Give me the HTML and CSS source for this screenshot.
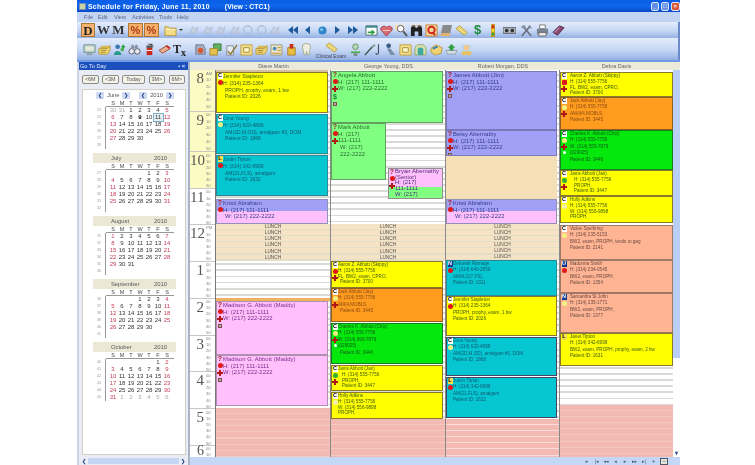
FILE: index.html
```html
<!DOCTYPE html>
<html lang="en">
<head>
<meta charset="utf-8">
<title>Schedule</title>
<link rel="stylesheet" href="styles.css">
</head>
<body>
<svg class="defs" xmlns="http://www.w3.org/2000/svg">
<symbol id="folder" viewBox="0 0 14 14"><path d="M1 3h4l1 1.500h7v8H1z" fill="#f5dc86" stroke="#b8963c"/><path d="M1.500 6h11" stroke="#fff3c0"/></symbol>
<symbol id="gray" viewBox="0 0 14 14"><path d="M2 11L6 3l3 3 3-3-2 8z" fill="#c5cfe2" stroke="#aeb9d2"/></symbol>
<symbol id="grayc" viewBox="0 0 14 14"><circle cx="7" cy="7" r="5" fill="none" stroke="#aeb9d2" stroke-width="1.500"/></symbol>
<symbol id="dl" viewBox="0 0 10 10"><path d="M5 1v8L0 5zM10 1v8L5 5z" fill="#1f5a9c"/></symbol>
<symbol id="dr" viewBox="0 0 10 10"><path d="M0 1v8l5-4zM5 1v8l5-4z" fill="#1f5a9c"/></symbol>
<symbol id="sl" viewBox="0 0 5 10"><path d="M5 1v8L0 5z" fill="#1f5a9c"/></symbol>
<symbol id="sr" viewBox="0 0 5 10"><path d="M0 1v8l5-4z" fill="#1f5a9c"/></symbol>
<symbol id="ball" viewBox="0 0 10 10"><circle cx="5" cy="5" r="4.500" fill="#2f86c8"/><circle cx="4" cy="4" r="1.500" fill="#8fd0f2"/></symbol>
<symbol id="win" viewBox="0 0 14 14"><path d="M1 2h12v10H1z" fill="#fff" stroke="#4a6a6a"/><path d="M1 2h12v2H1z" fill="#3a8a8a"/><path d="M3 8h4V6l4 3-4 3v-2H3z" fill="#2aa040"/></symbol>
<symbol id="heart" viewBox="0 0 14 14"><path d="M7 13L1 6.500C0 3 4 1 7 3.500 10 1 14 3 13 6.500z" fill="#d86a70" stroke="#a84048"/><path d="M3 7h8" stroke="#f4d0c8"/></symbol>
<symbol id="mag" viewBox="0 0 14 14"><path d="M0 1h10v6H0z" fill="#f3e2b0"/><circle cx="6" cy="5" r="3.500" fill="#fff" stroke="#555"/><path d="M9 8l4 5" stroke="#555" stroke-width="2"/></symbol>
<symbol id="binoc" viewBox="0 0 14 14"><path d="M1 13V4l2-3h2l1 3h2l1-3h2l2 3v9H9V8H5v5z" fill="#222"/><path d="M1 2h12" stroke="#c8a870"/></symbol>
<symbol id="q" viewBox="0 0 14 14"><path d="M1 1h12v12H1z" fill="#f3d9a0" stroke="#c88030"/><circle cx="7" cy="6.500" r="3.500" fill="none" stroke="#d02818" stroke-width="2"/><path d="M8 9l3 3" stroke="#d02818" stroke-width="2"/></symbol>
<symbol id="book" viewBox="0 0 14 14"><path d="M3 1h10l-2 9H1z" fill="#8a8a8a"/><path d="M1 10h10l-1 3H1z" fill="#e8b060"/></symbol>
<symbol id="tag" viewBox="0 0 14 14"><path d="M1 5l4-3 8 7-3 3z" fill="#ecd77a" stroke="#b8a040"/></symbol>
<symbol id="light" viewBox="0 0 6 14"><path d="M1 0h4v14H1z" fill="#c89020"/><circle cx="3" cy="3" r="1.500" fill="#d82010"/><circle cx="3" cy="7" r="1.500" fill="#f0e020"/><circle cx="3" cy="11" r="1.500" fill="#30b030"/></symbol>
<symbol id="glass" viewBox="0 0 14 14"><path d="M0 4h14v6H0z" fill="#b8bec8" stroke="#555"/><circle cx="4" cy="7" r="2" fill="#333"/><circle cx="10" cy="7" r="2" fill="#333"/></symbol>
<symbol id="tools" viewBox="0 0 14 14"><path d="M2 13L11 2M12 13L3 2" stroke="#6a7280" stroke-width="1.800"/><path d="M1 3l4-2 1 2-3 2zM10 1l3 3-2 1-2-2z" fill="#8a92a0"/></symbol>
<symbol id="print" viewBox="0 0 14 14"><path d="M4 1h6v4H4z" fill="#fff" stroke="#777"/><path d="M1 5h12v6H1z" fill="#7a8494"/><path d="M3 9h8v4H3z" fill="#e8e8e8" stroke="#666"/></symbol>
<symbol id="pbook" viewBox="0 0 14 14"><path d="M1 9l7-7 5 2-7 8z" fill="#8a4a70" stroke="#5a3050"/><path d="M3 9l5-5" stroke="#d8b0c8"/></symbol>
<symbol id="mon" viewBox="0 0 14 14"><path d="M1 2h12v8H1z" fill="#c8dcd8" stroke="#6a8a88"/><path d="M3 4h8v4H3z" fill="#e8e8d8"/><path d="M4 11h6v2H4z" fill="#8aa0a0"/></symbol>
<symbol id="fold2" viewBox="0 0 14 14"><path d="M1 6l3-3h9l-3 3z" fill="#d8b850"/><path d="M1 6h9l3-3v5l-3 4H1z" fill="#efd372" stroke="#b89a40"/><path d="M3 8h6M3 10h5" stroke="#a88a30"/></symbol>
<symbol id="ppl" viewBox="0 0 14 14"><circle cx="5" cy="4" r="2.500" fill="#3a78b0"/><path d="M1 13c0-6 8-6 8 0z" fill="#2a9a88"/><circle cx="10" cy="7" r="2" fill="#50b050"/><path d="M9 4h4M11 2v4" stroke="#20a040" stroke-width="1.500"/></symbol>
<symbol id="bino2" viewBox="0 0 14 14"><circle cx="4" cy="9" r="3" fill="#e8e8f0" stroke="#556"/><circle cx="10" cy="9" r="3" fill="#e8e8f0" stroke="#556"/><path d="M3 6l1-4h2l1 3 1-3h2l1 4" fill="#8a90a0"/></symbol>
<symbol id="ext" viewBox="0 0 14 14"><path d="M4 5h6v8H4z" fill="#c82818"/><path d="M5 1h5v2l2 1M4 3h6v2H4z" fill="#555" stroke="#555" stroke-width=".5"/><path d="M4 8h6" stroke="#fff"/></symbol>
<symbol id="pen" viewBox="0 0 14 14"><path d="M1 8l8-5 4 3-8 5z" fill="#e6b090" stroke="#a04830"/><path d="M9 3l4 3" stroke="#c82818" stroke-width="2"/></symbol>
<symbol id="red" viewBox="0 0 14 14"><path d="M2 2h8l2 4v6H2z" fill="#a9b2c4" stroke="#6a7488"/><circle cx="7" cy="8" r="3" fill="#d85a30"/></symbol>
<symbol id="stack" viewBox="0 0 14 14"><path d="M5 1h8v7H5z" fill="#60b060" stroke="#3a7a3a"/><path d="M1 6h8v7H1z" fill="#e8c050" stroke="#a88a30"/></symbol>
<symbol id="check" viewBox="0 0 14 14"><path d="M2 3h7v10H2z" fill="#e8ebf0" stroke="#808a9a"/><path d="M3 9l3 3 7-10" fill="none" stroke="#8a7830" stroke-width="1.500"/></symbol>
<symbol id="note" viewBox="0 0 14 14"><path d="M1 2h12v11H1z" fill="#f6e08a" stroke="#c0a040"/><path d="M4 5h6v5H4z" fill="#fff6c8" stroke="#a09040"/></symbol>
<symbol id="card" viewBox="0 0 14 14"><path d="M1 2h12v11H1z" fill="#e8e4c8" stroke="#9a9a80"/><circle cx="5" cy="6" r="2" fill="#4a88c0"/><path d="M8 5h4M8 8h4M2 11h10" stroke="#c09030"/></symbol>
<symbol id="nail" viewBox="0 0 10 14"><path d="M1 5h8v8H1z" fill="#e8c040" stroke="#a88030"/><path d="M3 1h4v5H3z" fill="#c83020"/></symbol>
<symbol id="tooth" viewBox="0 0 10 14"><path d="M1 2c3-2 5-2 8 0 1 4-1 6-1 10l-2 1-1-4-1 4-2-1C2 8 0 6 1 2z" fill="#f0eee0" stroke="#a0a890"/></symbol>
<symbol id="man" viewBox="0 0 14 14"><circle cx="7" cy="4" r="3" fill="#b8d8b8" stroke="#609060"/><path d="M2 9h10v2H2z" fill="#50b050"/><path d="M5 11h4v3H5z" fill="#808a90"/></symbol>
<symbol id="pick" viewBox="0 0 14 14"><path d="M1 13l8-9" stroke="#405850" stroke-width="1.500"/><path d="M9 4l3-2" stroke="#80a090" stroke-width="2"/></symbol>
<symbol id="hook" viewBox="0 0 8 14"><path d="M4 1v9c0 3-3 3-3 1" fill="none" stroke="#405060" stroke-width="1.300"/></symbol>
<symbol id="pers" viewBox="0 0 12 14"><circle cx="4" cy="3" r="2.500" fill="#3a5a80"/><path d="M2 6h4l5 7H6z" fill="#7a90a8"/></symbol>
<symbol id="arch" viewBox="0 0 14 14"><path d="M1 13V6c0-6 12-6 12 0v7z" fill="#d8e0a8" stroke="#90a878"/><path d="M4 13V7c0-3 6-3 6 0v6z" fill="#40a8a0"/></symbol>
<symbol id="sw" viewBox="0 0 14 14"><path d="M1 6l5-4 7 3-1 6-6 2-5-3z" fill="#efd372" stroke="#b89a40"/><path d="M3 6l5-2" stroke="#2a7ab8" stroke-width="2"/></symbol>
<symbol id="up" viewBox="0 0 14 14"><path d="M1 8l12 0-2 4H3z" fill="#d8dce8" stroke="#90a0a8"/><path d="M7 1l4 4H9v3H5V5H3z" fill="#30a040"/></symbol>
<symbol id="face" viewBox="0 0 14 14"><path d="M2 2h10v9H2z" fill="#b8d8e8"/><circle cx="7" cy="5" r="3" fill="#f0c890"/><path d="M2 9h10v4H2z" fill="#e8c060"/></symbol>
</svg>

<div class="window">
  <header class="titlebar">
    <span class="appicon"></span>
    <span class="title">Schedule for Friday, June 11, 2010</span>
    <span class="view">(View : CTC1)</span>
    <span class="winbtns"><i class="wb">_</i><i class="wb">&#9633;</i><i class="wb close">&#215;</i></span>
  </header>
  <nav class="menu"><span>File</span><span>Edit</span><span>View</span><span>Activities</span><span>Tools</span><span>Help</span></nav>

  <div class="toolbar tb1">
    <span class="vbtn on">D</span><span class="vbtn w">W</span><span class="vbtn m">M</span>
    <span class="pct on">%</span><span class="pct on second">%</span>
    <svg class="i g3"><use href="#folder"/></svg><span class="caret"></span>
    <svg class="dim g3"><use href="#gray"/></svg><svg class="dim"><use href="#gray"/></svg><svg class="dim"><use href="#gray"/></svg><svg class="dim"><use href="#gray"/></svg><svg class="dim"><use href="#grayc"/></svg><svg class="dim"><use href="#grayc"/></svg><svg class="dim"><use href="#gray"/></svg>
    <svg class="nav2 g5"><use href="#dl"/></svg><svg class="nav1"><use href="#sl"/></svg><svg class="navb"><use href="#ball"/></svg><svg class="nav1"><use href="#sr"/></svg><svg class="nav2"><use href="#dr"/></svg>
    <svg class="i"><use href="#win"/></svg><svg class="i"><use href="#heart"/></svg><svg class="i"><use href="#mag"/></svg><svg class="i"><use href="#binoc"/></svg><svg class="i"><use href="#q"/></svg><svg class="i"><use href="#book"/></svg><svg class="i"><use href="#tag"/></svg>
    <span class="dollar">$</span><svg class="tl"><use href="#light"/></svg><svg class="i g5"><use href="#glass"/></svg><svg class="i g2"><use href="#tools"/></svg><svg class="i g1"><use href="#print"/></svg><svg class="i g1"><use href="#pbook"/></svg>
  </div>

  <div class="toolbar tb2">
    <svg class="i"><use href="#mon"/></svg><svg class="i"><use href="#fold2"/></svg><svg class="i"><use href="#ppl"/></svg><svg class="i"><use href="#bino2"/></svg><svg class="i"><use href="#ext"/></svg><svg class="i"><use href="#pen"/></svg>
    <span class="tx">T<sub>x</sub></span>
    <svg class="i g5"><use href="#red"/></svg><svg class="i"><use href="#stack"/></svg>
    <svg class="i g1"><use href="#check"/></svg><svg class="i"><use href="#note"/></svg><svg class="i"><use href="#fold2"/></svg><svg class="i"><use href="#card"/></svg><svg class="i"><use href="#nail"/></svg><svg class="i"><use href="#tooth"/></svg>
    <span class="clin"><svg class="i"><use href="#tag"/></svg><small>Clinical Exam</small></span>
    <svg class="i"><use href="#man"/></svg><svg class="i"><use href="#pick"/></svg><svg class="hook"><use href="#hook"/></svg><svg class="i"><use href="#pers"/></svg><svg class="i"><use href="#note"/></svg><svg class="i"><use href="#arch"/></svg>
    <svg class="i g1"><use href="#sw"/></svg><svg class="i"><use href="#up"/></svg><svg class="i"><use href="#face"/></svg>
  </div>
  <div class="band"></div>

  <main class="main">
    <aside class="side">
      <div class="sidehead"><span>Go To Day</span><span class="pin">&#8226; &#215;</span></div>
      <div class="jump"><button>&lt;6M</button><button>&lt;3M</button><button class="today">Today</button><button>3M&gt;</button><button>6M&gt;</button></div>
      <div class="calpanel">
        <section class="month">
          <div class="mhead first"><b>&#10094;</b><span class="nm">June</span><b>&#10095;</b><b class="y1">&#10094;</b><span>2010</span><b>&#10095;</b></div>
          <div class="dow"><span>S</span><span>M</span><span>T</span><span>W</span><span>T</span><span>F</span><span>S</span></div>
          <div class="mbody"><div class="wk"><span>23</span><span>24</span><span>25</span><span>26</span><span>27</span><span>28</span></div>
          <div class="days"><span class="g">30</span><span class="g">31</span><span>1</span><span>2</span><span>3</span><span>4</span><span class="r">5</span><span class="r">6</span><span>7</span><span>8</span><b>9</b><span>10</span><span class="sel">11</span><span class="r">12</span><span class="r">13</span><span>14</span><span>15</span><span>16</span><span>17</span><span>18</span><span class="r">19</span><span class="r">20</span><span>21</span><span>22</span><span>23</span><span>24</span><span>25</span><span class="r">26</span><span class="r">27</span><span>28</span><span>29</span><span>30</span></div></div>
        </section>
        <section class="month">
          <div class="mhead"><span class="nm">July</span><span>2010</span></div>
          <div class="dow"><span>S</span><span>M</span><span>T</span><span>W</span><span>T</span><span>F</span><span>S</span></div>
          <div class="mbody"><div class="wk"><span>27</span><span>28</span><span>29</span><span>30</span><span>31</span><span>32</span></div>
          <div class="days"><span></span><span></span><span></span><span></span><span>1</span><span>2</span><span class="r">3</span><span class="r">4</span><span>5</span><span>6</span><span>7</span><span>8</span><span>9</span><span class="r">10</span><span class="r">11</span><span>12</span><span>13</span><span>14</span><span>15</span><span>16</span><span class="r">17</span><span class="r">18</span><span>19</span><span>20</span><span>21</span><span>22</span><span>23</span><span class="r">24</span><span class="r">25</span><span>26</span><span>27</span><span>28</span><span>29</span><span>30</span><span class="r">31</span></div></div>
        </section>
        <section class="month">
          <div class="mhead"><span class="nm">August</span><span>2010</span></div>
          <div class="dow"><span>S</span><span>M</span><span>T</span><span>W</span><span>T</span><span>F</span><span>S</span></div>
          <div class="mbody"><div class="wk"><span>31</span><span>32</span><span>33</span><span>34</span><span>35</span><span>36</span></div>
          <div class="days"><span class="r">1</span><span>2</span><span>3</span><span>4</span><span>5</span><span>6</span><span class="r">7</span><span class="r">8</span><span>9</span><span>10</span><span>11</span><span>12</span><span>13</span><span class="r">14</span><span class="r">15</span><span>16</span><span>17</span><span>18</span><span>19</span><span>20</span><span class="r">21</span><span class="r">22</span><span>23</span><span>24</span><span>25</span><span>26</span><span>27</span><span class="r">28</span><span class="r">29</span><span>30</span><span>31</span></div></div>
        </section>
        <section class="month">
          <div class="mhead"><span class="nm">September</span><span>2010</span></div>
          <div class="dow"><span>S</span><span>M</span><span>T</span><span>W</span><span>T</span><span>F</span><span>S</span></div>
          <div class="mbody"><div class="wk"><span>36</span><span>37</span><span>38</span><span>39</span><span>40</span><span>41</span></div>
          <div class="days"><span></span><span></span><span></span><span>1</span><span>2</span><span>3</span><span class="r">4</span><span class="r">5</span><span>6</span><span>7</span><span>8</span><span>9</span><span>10</span><span class="r">11</span><span class="r">12</span><span>13</span><span>14</span><span>15</span><span>16</span><span>17</span><span class="r">18</span><span class="r">19</span><span>20</span><span>21</span><span>22</span><span>23</span><span>24</span><span class="r">25</span><span class="r">26</span><span>27</span><span>28</span><span>29</span><span>30</span></div></div>
        </section>
        <section class="month">
          <div class="mhead"><span class="nm">October</span><span>2010</span></div>
          <div class="dow"><span>S</span><span>M</span><span>T</span><span>W</span><span>T</span><span>F</span><span>S</span></div>
          <div class="mbody"><div class="wk"><span>40</span><span>41</span><span>42</span><span>43</span><span>44</span><span>45</span></div>
          <div class="days"><span></span><span></span><span></span><span></span><span></span><span>1</span><span class="r">2</span><span class="r">3</span><span>4</span><span>5</span><span>6</span><span>7</span><span>8</span><span class="r">9</span><span class="r">10</span><span>11</span><span>12</span><span>13</span><span>14</span><span>15</span><span class="r">16</span><span class="r">17</span><span>18</span><span>19</span><span>20</span><span>21</span><span>22</span><span class="r">23</span><span class="r">24</span><span>25</span><span>26</span><span>27</span><span>28</span><span>29</span><span class="r">30</span><span class="r">31</span><span class="g">1</span><span class="g">2</span><span class="g">3</span><span class="g">4</span><span class="g">5</span><span class="g">6</span></div></div>
        </section>
      </div>
      <div class="hscroll"><b>&#10094;</b><i></i><b>&#10095;</b></div>
    </aside>

    <section class="board">
      <div class="colheads"><span class="c0"></span><span class="c1">Diane Martin</span><span class="c2">George Young, DDS</span><span class="c3">Robert Morgan, DDS</span><span class="c4">Debra Davis</span><span class="c5"></span></div>
      <div class="mid">
        <div class="sched">
          <div class="times">
            <div class="hr h40 am"><b>8</b><ul><li>AM</li><li>10</li><li>20</li><li>30</li><li>40</li><li>50</li></ul></div>
            <div class="hr h40 am"><b>9</b><ul><li>00</li><li>10</li><li>20</li><li>30</li><li>40</li><li>50</li></ul></div>
            <div class="hr h37 am"><b>10</b><ul><li>00</li><li>10</li><li>20</li><li>30</li><li>40</li><li>50</li></ul></div>
            <div class="hr h36"><b>11</b><ul><li>00</li><li>10</li><li>20</li><li>30</li><li>40</li><li>50</li></ul></div>
            <div class="hr h37"><b>12</b><ul><li>PM</li><li>10</li><li>20</li><li>30</li><li>40</li><li>50</li></ul></div>
            <div class="hr h37"><b>1</b><ul><li>00</li><li>10</li><li>20</li><li>30</li><li>40</li><li>50</li></ul></div>
            <div class="hr h37"><b>2</b><ul><li>00</li><li>10</li><li>20</li><li>30</li><li>40</li><li>50</li></ul></div>
            <div class="hr h37"><b>3</b><ul><li>00</li><li>10</li><li>20</li><li>30</li><li>40</li><li>50</li></ul></div>
            <div class="hr h37"><b>4</b><ul><li>00</li><li>10</li><li>20</li><li>30</li><li>40</li><li>50</li></ul></div>
            <div class="hr h37"><b>5</b><ul><li>00</li><li>10</li><li>20</li><li>30</li><li>40</li><li>50</li></ul></div>
            <div class="hr h12"><b>6</b><ul><li>00</li><li>10</li></ul></div>
          </div>

          <div class="col">
            <div class="tan" style="grid-row:1/3"></div>
            <div class="appt yellow" style="grid-row:3/44"><div class="marks"><i class="chip">C</i><i class="dot red"></i></div><div class="lines sm"><p>Jennifer Stapleton</p><p>H: (314) 235-1364</p><p class="in">PROPH, prophy, exam, 1 bw</p><p class="in">Patient ID: 2026</p></div></div>
            <div class="appt cyan" style="grid-row:45/85"><div class="marks"><i class="chip">C</i><i class="dot yel"></i></div><div class="lines sm"><p>Gina Young</p><p>H: (314) 620-4899</p><p class="in">AM(2D,M,OD), amalgam #3, DOM</p><p class="in">Patient ID: 1868</p></div></div>
            <div class="appt cyan" style="grid-row:86/127"><div class="marks"><i class="chip y">L</i><i class="dot red"></i></div><div class="lines sm"><p>Justin Tipton</p><p>H: (314) 342-6999</p><p class="in">AM(21,FLS), amalgam</p><p class="in">Patient ID: 1632</p></div></div>
            <div class="appt kristi" style="grid-row:130/155"><div class="marks"><i class="q">?</i><i class="dot red"></i></div><div class="lines lg"><p>Kristi Abraham</p><p>H: (217) 111-1111</p><p class="in">W: (217) 222-2222</p></div></div>
            <div class="lunch" style="grid-row:155/192"><span>LUNCH</span><span>LUNCH</span><span>LUNCH</span><span>LUNCH</span><span>LUNCH</span><span>LUNCH</span></div>
            <div class="now" style="grid-row:229/232"></div>
            <div class="appt pink" style="grid-row:232/286"><div class="marks"><i class="q">?</i><i class="dot red"></i><i class="cross"></i><i class="box"></i></div><div class="lines lg"><p>Madison G. Abbott (Maddy)</p><p>H: (217) 111-1111</p><p>W: (217) 222-2222</p></div></div>
            <div class="appt pink" style="grid-row:286/337"><div class="marks"><i class="q">?</i><i class="dot red"></i><i class="cross"></i><i class="box"></i></div><div class="lines lg"><p>Madison G. Abbott (Maddy)</p><p>H: (217) 111-1111</p><p>W: (217) 222-2222</p></div></div>
            <div class="closed" style="grid-row:339/388"></div>
          </div>

          <div class="col">
            <div class="appt green" style="grid-row:2/54"><div class="marks"><i class="q">?</i><i class="dot red"></i><i class="cross"></i><i class="dollarm">$</i><i class="box"></i></div><div class="lines lg"><p>Angela Abbott</p><p>H: (217) 111-1111</p><p>W: (217) 222-2222</p></div></div>
            <div class="appt green left" style="grid-row:54/111"><div class="marks"><i class="q">?</i><i class="dot red"></i><i class="cross"></i></div><div class="lines lg"><p>Mark Abbott</p><p>H: (217)</p><p>111-1111</p><p class="in">W: (217)</p><p class="in">222-2222</p></div></div>
            <div class="appt bryan right" style="grid-row:99/130"><div class="marks"><i class="q">?</i><i class="dot red"></i><i class="cross"></i></div><div class="lines lg"><p>Bryan Abernathy</p><p>(Senior)</p><p>H: (217)</p><p>111-1111</p><p>W: (217)</p></div></div>
            <div class="lunch" style="grid-row:155/192"><span>LUNCH</span><span>LUNCH</span><span>LUNCH</span><span>LUNCH</span><span>LUNCH</span><span>LUNCH</span></div>
            <div class="appt yellow" style="grid-row:192/219"><div class="marks"><i class="chip">C</i><i class="dot red"></i><i class="cross"></i></div><div class="lines xs"><p>Aaron Z. Abbott (Skippy)</p><p>H: (314) 555-7756</p><p>FL, BW2, exam, CPRO,</p><p class="in">Patient ID: 3700</p></div></div>
            <div class="appt orange" style="grid-row:219/253"><div class="marks"><i class="chip">C</i><i class="dot yel"></i><i class="cross"></i></div><div class="lines xs"><p>Jack Abbott (Jay)</p><p>H: (314) 555-7756</p><p>AM(4,MOBLS,</p><p class="in">Patient ID: 3445</p></div></div>
            <div class="appt lime" style="grid-row:254/295"><div class="marks"><i class="chip">C</i><i class="dot yel"></i><i class="cross"></i><i class="dot tiny"></i></div><div class="lines xs"><p>Charles K. Abbott (Chip)</p><p>H: (314) 555-7756</p><p>W: (314) 999-7879</p><p>(029025)</p><p class="in">Patient ID: 3446</p></div></div>
            <div class="appt yellow" style="grid-row:296/322"><div class="marks"><i class="chip">C</i><i class="dot grn"></i><i class="cross"></i></div><div class="lines xs deep"><p>Janis Abbott (Jan)</p><p>H: (314) 555-7756</p><p>PROPH,</p><p>Patient ID: 3447</p></div></div>
            <div class="appt yellow" style="grid-row:323/350"><div class="marks"><i class="chip">C</i><i class="dot pale"></i></div><div class="lines xs"><p>Holly Adkins</p><p>H: (314) 555-7756</p><p>W: (314) 556-9898</p><p>PROPH,</p></div></div>
            <div class="closed" style="grid-row:350/388"></div>
          </div>

          <div class="col">
            <div class="appt purple" style="grid-row:2/61"><div class="marks"><i class="q">?</i><i class="dot red"></i><i class="cross"></i><i class="box"></i></div><div class="lines lg"><p>James Abbott (Jim)</p><p>H: (217) 111-1111</p><p>W: (217) 222-2222</p></div></div>
            <div class="appt purple" style="grid-row:61/87"><div class="marks"><i class="q">?</i><i class="dot red"></i><i class="cross"></i><i class="box"></i></div><div class="lines lg"><p>Betsy Abernathy</p><p>H: (217) 111-1111</p><p>W: (217) 222-2222</p></div></div>
            <div class="tan spot" style="grid-row:87/130"></div>
            <div class="appt kristi" style="grid-row:130/155"><div class="marks"><i class="q">?</i><i class="dot red"></i></div><div class="lines lg"><p>Kristi Abraham</p><p>H: (217) 111-1111</p><p class="in">W: (217) 222-2222</p></div></div>
            <div class="lunch" style="grid-row:155/191"><span>LUNCH</span><span>LUNCH</span><span>LUNCH</span><span>LUNCH</span><span>LUNCH</span><span>LUNCH</span></div>
            <div class="appt cyan" style="grid-row:191/227"><div class="marks"><i class="chip n">N</i><i class="dot red"></i></div><div class="lines xs"><p>Deborah Ramage</p><p>H: (314) 640-2859</p><p>AMALG(7,FS),</p><p>Patient ID: 1311</p></div></div>
            <div class="appt yellow" style="grid-row:227/267"><div class="marks"><i class="chip">C</i><i class="dot red"></i></div><div class="lines xs tall"><p>Jennifer Stapleton</p><p>H: (314) 235-1364</p><p>PROPH, prophy, exam, 1 bw</p><p>Patient ID: 2026</p></div></div>
            <div class="appt cyan bd" style="grid-row:268/307"><div class="marks"><i class="chip">C</i><i class="dot yel"></i></div><div class="lines xs"><p>Gina Young</p><p>H: (314) 620-4899</p><p>AM(2D,M,OD), amalgam #3, DOM</p><p>Patient ID: 1868</p></div></div>
            <div class="appt cyan bd" style="grid-row:308/349"><div class="marks"><i class="chip y">L</i><i class="dot red"></i></div><div class="lines xs"><p>Justin Tipton</p><p>H: (314) 342-6999</p><p>AM(21,FLS), amalgam</p><p>Patient ID: 1632</p></div></div>
            <div class="closed lined" style="grid-row:350/388"></div>
          </div>

          <div class="col last">
            <div class="appt yellow" style="grid-row:3/28"><div class="marks"><i class="chip">C</i><i class="dot redsq"></i><i class="cross"></i></div><div class="lines xs ind"><p>Aaron Z. Abbott (Skippy)</p><p>H: (314) 555-7756</p><p>FL, BW2, exam, CPRO,</p><p>Patient ID: 3700</p></div></div>
            <div class="appt orange" style="grid-row:28/61"><div class="marks"><i class="chip">C</i><i class="dot yel"></i><i class="cross"></i></div><div class="lines xs ind"><p>Jack Abbott (Jay)</p><p>H: (314) 555-7756</p><p>AM(4/4,MOBLS,</p><p>Patient ID: 3445</p></div></div>
            <div class="appt lime" style="grid-row:61/101"><div class="marks"><i class="chip">C</i><i class="dot yel"></i><i class="cross"></i><i class="dot tiny"></i></div><div class="lines xs ind"><p>Charles K. Abbott (Chip)</p><p>H: (314) 555-7756</p><p>W: (314) 555-7879</p><p>(029025)</p><p>Patient ID: 3446</p></div></div>
            <div class="appt yellow" style="grid-row:101/127"><div class="marks"><i class="chip">C</i><i class="dot grn"></i><i class="cross"></i></div><div class="lines xs ind deep"><p>Janis Abbott (Jan)</p><p>H: (314) 555-7756</p><p>PROPH,</p><p>Patient ID: 3447</p></div></div>
            <div class="appt yellow" style="grid-row:127/154"><div class="marks"><i class="chip">C</i><i class="dot pale"></i></div><div class="lines xs ind"><p>Holly Adkins</p><p>H: (314) 555-7756</p><p>W: (314) 556-9898</p><p>PROPH,</p></div></div>
            <div class="appt salmon" style="grid-row:156/191"><div class="marks"><i class="chip">C</i><i class="dot yel"></i></div><div class="lines xs ind"><p>Vickie Spelbring</p><p>H: (314) 235-5153</p><p>BW2, exam, PROPH, tends to gag</p><p>Patient ID: 2141</p></div></div>
            <div class="appt salmon" style="grid-row:191/224"><div class="marks"><i class="chip n">U</i><i class="dot red"></i></div><div class="lines xs ind"><p>Madonna Smith</p><p>H: (314) 234-0545</p><p>BW2, exam, PROPH,</p><p>Patient ID: 1354</p></div></div>
            <div class="appt salmon" style="grid-row:224/264"><div class="marks"><i class="chip n">N</i><i class="dot yel"></i></div><div class="lines xs ind"><p>Samantha St.John</p><p>H: (314) 235-1771</p><p>BW2, exam, PROPH,</p><p>Patient ID: 1377</p></div></div>
            <div class="appt yellow" style="grid-row:264/297"><div class="marks"><i class="chip y">L</i></div><div class="lines xs ind tall"><p>Janet Tipton</p><p>H: (314) 342-6999</p><p>BW2, exam, PROPH, prophy, exam, 2 bw</p><p>Patient ID: 1631</p></div></div>
            <div class="closed" style="grid-row:336/388"></div>
          </div>
        </div>
        <div class="vscroll"><i></i><b>&#9662;</b></div>
      </div>
      <div class="pager"><span>&#9656;</span><span>|&#9666;</span><span>&#9666;&#9666;</span><span>&#9666;</span><span>&#9656;</span><span>&#9656;&#9656;</span><span>&#9656;|</span><span>+</span><span class="minus">&#8722;</span></div>
    </section>
  </main>
</div>
</body>
</html>
```
FILE: styles.css
```css
* { box-sizing: border-box; }
html, body { margin: 0; padding: 0; background: #fff; }
body { width: 755px; height: 465px; overflow: hidden; font-family: "Liberation Sans", Arial, sans-serif; }
.defs { display: none; }
p, ul { margin: 0; padding: 0; list-style: none; }
i, b { font-style: normal; }

.window { margin-left: 77px; width: 603px; height: 465px; display: flex; flex-direction: column; background: #c7d8f5; overflow: hidden; filter: blur(.35px); }

.titlebar { height: 12px; flex: none; display: flex; align-items: center; background: linear-gradient(#0a5ce4, #0f66ee 50%, #0848c4); color: #fff; font-weight: bold; font-size: 6.8px; padding-left: 2px; letter-spacing: .33px; }
.appicon { width: 7px; height: 7px; margin-right: 2px; background: #c8d4a8; border: 1px solid #7a8ab0; }
.view { margin-left: 15px; letter-spacing: .1px; }
.winbtns { margin-left: auto; display: flex; gap: 2px; }
.wb { width: 8px; height: 9px; background: #5f8fe6; border: 1px solid #dde8fb; border-radius: 2px; font-size: 6px; line-height: 6px; text-align: center; }
.close { background: #d8583a; width: 9px; }

.menu { height: 10px; flex: none; display: flex; align-items: center; padding-left: 7px; background: #c2d4f4; color: #5a6680; font-size: 5.6px; }
.menu span:nth-child(1) { width: 14px; }
.menu span:nth-child(2) { width: 16px; }
.menu span:nth-child(3) { width: 18px; }
.menu span:nth-child(4) { width: 27px; }
.menu span:nth-child(5) { width: 18px; }

.toolbar { flex: none; display: flex; align-items: center; background: linear-gradient(#e3ecfb, #c6d7f5 55%, #94b0e4); border-right: 2px solid #6a8ac8; }
.tb1 { height: 16px; padding-left: 4px; gap: 2px; }
.tb2 { height: 22px; padding-left: 6px; gap: 2px; }
.i { width: 13px; height: 13px; flex: none; }
.dim { width: 11.500px; height: 12px; flex: none; }
.g1 { margin-left: 1px; }
.g2 { margin-left: 2px; }
.g3 { margin-left: 3px; }
.g5 { margin-left: 5px; }
.vbtn { width: 11px; height: 14px; font: bold 13px/14px "Liberation Serif", serif; text-align: center; color: #333; }
.vbtn.on { width: 14px; background: #f7b470; border: 1px solid #b07838; color: #222; }
.vbtn.m { width: 13px; margin-left: 2px; }
.pct { width: 15px; height: 14px; margin-left: 1px; background: #f6ae68; border: 1px solid #b07838; font: bold 11px/12px "Liberation Sans", sans-serif; color: #a83a18; text-align: center; }
.pct.second { margin-left: -1px; }
.caret { width: 4px; height: 0; border: 2px solid transparent; border-top-color: #333; border-bottom: 0; }
.nav2 { width: 10px; height: 10px; flex: none; margin-right: 5px; }
.nav1 { width: 5px; height: 10px; flex: none; margin-right: 6px; }
.navb { width: 9px; height: 9px; flex: none; margin-right: 6px; }
.dollar { width: 10px; margin-left: 3px; font: bold 13px/14px "Liberation Sans", sans-serif; color: #1e8a3a; text-align: center; }
.tl { width: 6px; height: 13px; flex: none; margin-left: 5px; }
.tx { width: 14px; font: bold 12px/14px "Liberation Serif", serif; color: #222; }
.tx sub { font-size: 10px; line-height: 0; }
.hook { width: 7px; height: 13px; flex: none; margin-left: -4px; }
.clin { width: 32px; display: flex; flex-direction: column; align-items: center; line-height: 5px; margin-top: 1px; }
.clin small { font-size: 5px; color: #445; white-space: nowrap; }
.band { height: 2px; flex: none; background: #6e9be2; }

.main { flex: 1; min-height: 0; display: flex; }
.side { width: 113px; flex: none; display: flex; flex-direction: column; background: #e9ecf4; border-left: 2px solid #cdd6e6; border-right: 2px solid #aab4c8; }
.sidehead { height: 8px; flex: none; display: flex; justify-content: space-between; align-items: center; background: #1c50bc; color: #dfe8fb; font-size: 5.6px; padding: 0 3px 0 1px; }
.pin { font-weight: bold; }
.jump { height: 19px; flex: none; display: flex; align-items: center; gap: 3.500px; padding-left: 3px; }
.jump button { width: 16.500px; height: 9px; padding: 0; background: #f4f3ea; border: 1px solid #8d8d84; border-radius: 2px; color: #555; font: 5.4px/7px "Liberation Sans", sans-serif; }
.jump .today { width: 23px; }
.calpanel { flex: 1; min-height: 0; margin: 0 2px 2px 3px; background: #fff; border: 1px solid #cfd2c4; padding: 0 0 0 10px; overflow: hidden; }
.month { width: 83px; height: 63px; }
.mhead { height: 10px; background: #ebe9d6; display: flex; justify-content: space-between; align-items: center; padding: 0 9px 0 18px; font-size: 5.8px; color: #555; }
.mhead.first { background: #fff; padding: 0 2px 0 3px; }
.mhead b { width: 8px; height: 7px; background: #d2ddf4; color: #2a4a8c; font-size: 5px; line-height: 7px; text-align: center; }
.mhead.first .y1 { margin-left: 6px; }
.dow { height: 7px; display: grid; grid-template-columns: repeat(7, 9px); padding-left: 15.500px; font-size: 5.5px; line-height: 7px; color: #444; text-align: center; }
.mbody { display: grid; grid-template-columns: 13px 1fr; }
.wk { display: grid; grid-template-rows: repeat(6, 7px); font-size: 3.600px; line-height: 7px; color: #999; text-align: center; border-right: 1px solid #999; }
.days { display: grid; grid-template-columns: repeat(7, 9px); grid-auto-rows: 7px; padding-left: 2.500px; border-top: 1px solid #999; margin-top: -1px; align-self: start; height: 43px; width: 68px; font-size: 6px; line-height: 7px; color: #333; text-align: center; }
.days .r { color: #c8405a; }
.days .g { color: #aaa; }
.days .sel { outline: 1px solid #7fb0c8; background: #e4eef4; }
.days b { color: #000; }
.hscroll { height: 8px; flex: none; display: flex; align-items: center; padding: 0 3px; gap: 2px; font-size: 5px; color: #2a4a8c; }
.hscroll i { flex: 1; height: 6px; background: #c5d6f4; }

.board { flex: 1; min-width: 0; display: flex; flex-direction: column; background: #fff; }
.colheads { height: 8px; flex: none; display: grid; grid-template-columns: 26px 115px 115px 114px 113px 1fr; background: #ecead9; color: #666; font-size: 5.4px; line-height: 8px; text-align: center; }
.mid { flex: 1; min-height: 0; display: flex; }
.sched { display: grid; grid-template-columns: 26px 115px 115px 114px 113px; height: 387px; overflow: hidden; }
.vscroll { width: 7px; display: flex; flex-direction: column; justify-content: space-between; align-items: center; font-size: 6px; line-height: 8px; color: #2a4a8c; background: #fff; }
.vscroll i { width: 100%; height: 288px; background: #b9d0f4; }
.pager { height: 8px; flex: none; display: flex; justify-content: flex-end; align-items: center; gap: 3.500px; padding-right: 12px; background: #c5d7f6; color: #4a5a78; font: 5px/8px "DejaVu Sans", sans-serif; }
.pager span { width: 6px; text-align: center; }
.minus { border: 1px solid #556; background: #e6e6e0; width: 8px !important; line-height: 5px; }

.times { display: flex; flex-direction: column; background: #fff; border-right: 1px solid #777; }
.hr { flex: none; display: grid; grid-template-columns: 16px 1fr; border-top: 1px solid #c8c8c0; }
.hr:first-child { border-top: 0; }
.am { background: #fdfbc4; }
.h40 { height: 40.500px; }
.h37 { height: 36.900px; }
.h36 { height: 36px; }
.h12 { height: 11.700px; }
.hr b { font: 15px/13px "Liberation Serif", serif; color: #555; text-align: right; padding: 2px 2px 0 0; }
.h12 b { font-size: 14px; line-height: 10.500px; padding-top: 0; }
.hr ul { display: flex; flex-direction: column; justify-content: flex-start; font-size: 4.200px; color: #888; line-height: 6.150px; padding-top: .5px; }
.h12 ul { line-height: 5.500px; padding-top: 0; }
.h40 ul { line-height: 6.700px; }
.col { display: grid; grid-template-columns: 56px 1fr; grid-template-rows: repeat(387, 1px); border-right: 1px solid #8a8a8a; background: repeating-linear-gradient(#fff 0 4.200px, #dadbd6 4.200px 6.100px); overflow: hidden; }
.col.last { border-right: 0; padding-right: 0; }
.col > * { grid-column: 1 / -1; min-height: 0; overflow: hidden; }
.col > .left { grid-column: 1; margin-right: 1px; }
.col > .right { grid-column: 2; margin: 0 2px 0 1px; }

.appt { display: flex; margin-right: 2px; border: 1px solid #777; color: #3a5a20; }
.col.last .appt { margin-right: 0; }
.marks { width: 6px; flex: none; display: flex; flex-direction: column; align-items: center; }
.marks i { display: block; flex: none; }
.chip { width: 5px; height: 5.500px; background: #fff; color: #000; font: bold 5.500px/5.500px "Liberation Sans", sans-serif; text-align: center; margin-bottom: 1px; }
.chip.y { background: #f2e050; }
.chip.n { background: #123a90; color: #fff; }
.q { width: 5px; height: 6px; color: #a02020; font: bold 7px/6px "Liberation Sans", sans-serif; text-align: center; margin-bottom: 1px; }
.dot { width: 5px; height: 5px; border-radius: 50%; margin-bottom: 1.500px; }
.red { background: #e01818; }
.redsq { background: #e01818; border-radius: 1px; }
.yel { background: #f4f080; }
.grn { background: #30b030; }
.pale { background: #f2f2b0; }
.tiny { width: 3px; height: 3px; background: #fff; }
.cross { width: 6px; height: 6px; margin-bottom: 1px; background: linear-gradient(#b01818, #b01818) center / 100% 2px no-repeat, linear-gradient(#b01818, #b01818) center / 2px 100% no-repeat; }
.box { width: 4px; height: 4px; margin-top: 1px; background: #b0a8a8; border: 1px solid #805050; }
.dollarm { width: 5px; height: 7px; color: #178030; font: bold 7px/7px "Liberation Sans", sans-serif; text-align: center; margin: 0 0 1px; }
.lines { min-width: 0; white-space: nowrap; }
.lg { font-size: 5.800px; line-height: 6.700px; letter-spacing: .08px; }
.sm { font-size: 5px; line-height: 6.800px; }
.xs { font-size: 4.600px; line-height: 5.800px; }
.lime .xs, .salmon .xs, .cyan .xs, .orange .xs, .tall { line-height: 6.400px; }
.ind { padding-left: 3px; }
.in { padding-left: 2px; }
.deep p:not(:first-child) { padding-left: 4px; }

.yellow { background: #ffff00; color: #3d5a12; border-color: #8a7a30; }
.cyan { background: #06c6d2; color: #125a70; border-color: #2a8a98; }
.bd { border-color: #446; }
.purple { background: #a0a0f6; color: #343a8a; border-color: #7878b8; }
.pink { background: #ffc0fc; color: #7a2a8a; border-color: #b090b0; }
.green { background: #80ff80; color: #276a30; border-color: #60a060; }
.orange { background: #ff9c20; color: #8a4a10; border-color: #906020; }
.lime { background: #04e80c; color: #105a18; border-color: #108020; }
.salmon { background: #ffb494; color: #6a4a40; border-color: #a07868; }
.kristi { background: linear-gradient(#a0a0f6 48%, #ffc0fc 48%); color: #343a8a; border-color: #9090b8; }
.bryan { background: linear-gradient(#ffc0fc 61%, #80ff80 61%); color: #4a2a7a; border-color: #909090; }
.bryan .lines { line-height: 5.700px; }
.tan { background: #d8bfa0; margin-right: 2px; }
.tan.spot { background: #f5dfb6; }
.lunch { display: grid; grid-auto-rows: 1fr; background: repeating-linear-gradient(#f6e2c4 0 4.800px, #e2dfc6 4.800px 6.100px); font-size: 4.800px; line-height: 6.100px; color: #555; text-align: center; }
.closed { background: repeating-linear-gradient(#f2bab2 0 5px, #f5c8c0 5px 6.100px); }
.lined { background: repeating-linear-gradient(#f2bab2 0 5px, #fbdcd8 5px 6.100px); }
.now { background: #f0b060; }
```
